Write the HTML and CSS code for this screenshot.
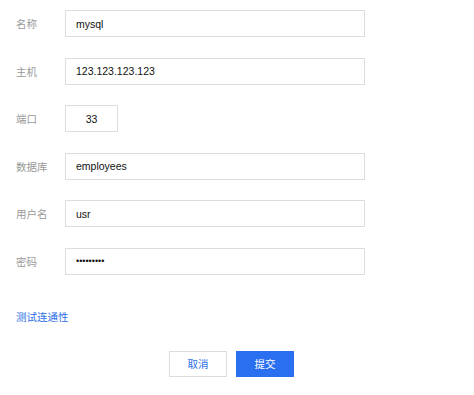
FILE: index.html
```html
<!DOCTYPE html>
<html lang="zh-CN">
<head>
    <meta charset="UTF-8">
    <title>数据库连接</title>
    <link rel="stylesheet" href="styles.css">
</head>
<body>
    <form class="form">
        <div class="form-row">
            <label class="form-label">名称</label>
            <input class="form-input" type="text" value="mysql">
        </div>
        <div class="form-row">
            <label class="form-label">主机</label>
            <input class="form-input" type="text" value="123.123.123.123">
        </div>
        <div class="form-row">
            <label class="form-label">端口</label>
            <input class="form-input form-input-short" type="text" value="33">
        </div>
        <div class="form-row">
            <label class="form-label">数据库</label>
            <input class="form-input" type="text" value="employees">
        </div>
        <div class="form-row">
            <label class="form-label">用户名</label>
            <input class="form-input" type="text" value="usr">
        </div>
        <div class="form-row">
            <label class="form-label">密码</label>
            <input class="form-input form-input-password" type="password" value="123456789">
        </div>

        <a class="test-link" href="#">测试连通性</a>

        <div class="form-actions">
            <button class="btn btn-default" type="button">取消</button>
            <button class="btn btn-primary" type="button">提交</button>
        </div>
    </form>
</body>
</html>
```

FILE: styles.css
```css
body {
    margin: 0;
    background-color: #fff;
    font-family: "Liberation Sans", "Noto Sans CJK SC", sans-serif;
}

.form {
    padding: 10px 0 0 16px;
}

.form-row {
    display: flex;
    align-items: center;
    height: 27px;
    margin-bottom: 20.6px;
}

.form-label {
    width: 49px;
    flex-shrink: 0;
    font-family: "Noto Sans CJK SC", sans-serif;
    font-size: 10.5px;
    color: #999;
}

.form-input {
    width: 300px;
    height: 27px;
    box-sizing: border-box;
    margin: 0;
    padding: 0 10px;
    border: 1px solid #ddd;
    border-radius: 0;
    outline: none;
    font-family: "Liberation Sans", sans-serif;
    font-size: 10.5px;
    color: #111;
}

.form-input-short {
    width: 53px;
    text-align: center;
}

.form-input-password {
    font-size: 9px;
}

.test-link {
    display: block;
    width: max-content;
    margin-top: 33px;
    line-height: 18px;
    font-family: "Noto Sans CJK SC", sans-serif;
    font-size: 10.5px;
    color: #2d6fe6;
    text-decoration: none;
}

.form-actions {
    display: flex;
    gap: 9px;
    margin-top: 25px;
    padding-left: 153px;
}

.btn {
    width: 58px;
    height: 26px;
    box-sizing: border-box;
    margin: 0;
    padding: 0;
    border-radius: 0;
    font-family: "Noto Sans CJK SC", sans-serif;
    font-size: 10.5px;
    cursor: pointer;
}

.btn-default {
    border: 1px solid #ddd;
    background-color: #fff;
    color: #2d6fe6;
}

.btn-primary {
    border: 1px solid #2a6ff0;
    background-color: #2a6ff0;
    color: #fff;
}
```
